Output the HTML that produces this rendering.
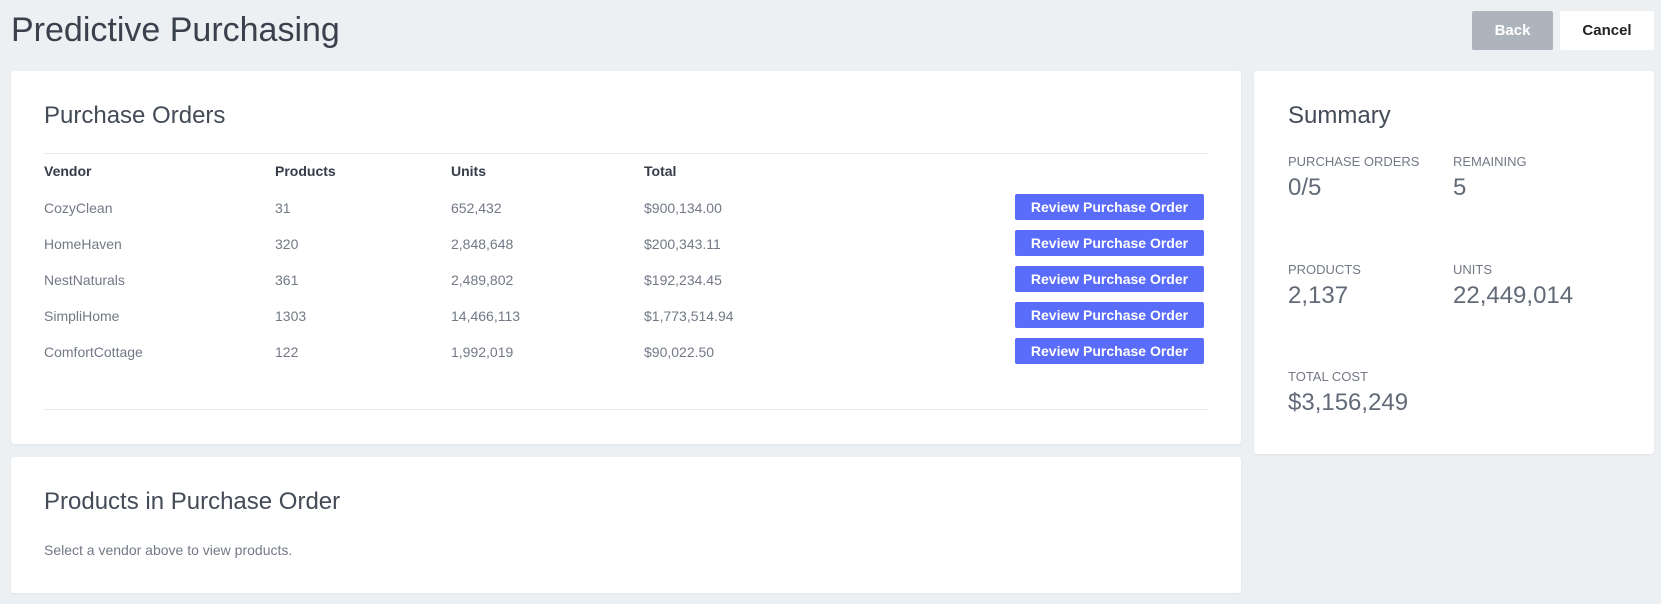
<!DOCTYPE html>
<html><head><style>
*{margin:0;padding:0;box-sizing:border-box}
body{width:1661px;height:604px;background:#edf0f3;font-family:"Liberation Sans",sans-serif;color:#333;position:relative;overflow:hidden}
.a{position:absolute;white-space:nowrap}
.card{position:absolute;background:#fff;border-radius:3px;box-shadow:0 1px 2px rgba(0,0,0,.06)}
.h{font-size:24px;color:#444b57}
.th{font-size:14px;font-weight:bold;color:#353c48}
.td{font-size:14px;color:#727985}
.btn{position:absolute;left:1015px;width:189px;height:26px;background:#5a6cfa;color:#fff;font-size:14px;font-weight:bold;text-align:center;line-height:26px;border-radius:2px}
.lab{font-size:13px;color:#727985}
.val{font-size:24px;color:#626a78}
</style></head><body>
<div class="a" style="left:11px;top:11px;font-size:34px;color:#3a414d">Predictive Purchasing</div>
<div class="a" style="left:1472px;top:11px;width:81px;height:39px;background:#adb4bc;color:#fff;font-weight:bold;font-size:15px;text-align:center;line-height:39px;border-radius:2px">Back</div>
<div class="a" style="left:1560px;top:11px;width:94px;height:39px;background:#fff;color:#222;font-weight:bold;font-size:15px;text-align:center;line-height:39px;border-radius:2px">Cancel</div>

<div class="card" style="left:11px;top:71px;width:1230px;height:373px"></div>
<div class="a h" style="left:44px;top:102px">Purchase Orders</div>
<div class="a" style="left:44px;top:153px;width:1164px;height:1px;background:#e8eaed"></div>
<div class="a th" style="left:44px;top:163px">Vendor</div>
<div class="a th" style="left:275px;top:163px">Products</div>
<div class="a th" style="left:451px;top:163px">Units</div>
<div class="a th" style="left:644px;top:163px">Total</div>

<div class="a td" style="left:44px;top:200px">CozyClean</div><div class="a td" style="left:275px;top:200px">31</div><div class="a td" style="left:451px;top:200px">652,432</div><div class="a td" style="left:644px;top:200px">$900,134.00</div><div class="btn" style="top:194px">Review Purchase Order</div>
<div class="a td" style="left:44px;top:236px">HomeHaven</div><div class="a td" style="left:275px;top:236px">320</div><div class="a td" style="left:451px;top:236px">2,848,648</div><div class="a td" style="left:644px;top:236px">$200,343.11</div><div class="btn" style="top:230px">Review Purchase Order</div>
<div class="a td" style="left:44px;top:272px">NestNaturals</div><div class="a td" style="left:275px;top:272px">361</div><div class="a td" style="left:451px;top:272px">2,489,802</div><div class="a td" style="left:644px;top:272px">$192,234.45</div><div class="btn" style="top:266px">Review Purchase Order</div>
<div class="a td" style="left:44px;top:308px">SimpliHome</div><div class="a td" style="left:275px;top:308px">1303</div><div class="a td" style="left:451px;top:308px">14,466,113</div><div class="a td" style="left:644px;top:308px">$1,773,514.94</div><div class="btn" style="top:302px">Review Purchase Order</div>
<div class="a td" style="left:44px;top:344px">ComfortCottage</div><div class="a td" style="left:275px;top:344px">122</div><div class="a td" style="left:451px;top:344px">1,992,019</div><div class="a td" style="left:644px;top:344px">$90,022.50</div><div class="btn" style="top:338px">Review Purchase Order</div>
<div class="a" style="left:44px;top:409px;width:1164px;height:1px;background:#e8eaed"></div>

<div class="card" style="left:11px;top:457px;width:1230px;height:136px"></div>
<div class="a h" style="left:44px;top:488px">Products in Purchase Order</div>
<div class="a td" style="left:44px;top:542px">Select a vendor above to view products.</div>

<div class="card" style="left:1254px;top:71px;width:400px;height:383px"></div>
<div class="a h" style="left:1288px;top:102px">Summary</div>
<div class="a lab" style="left:1288px;top:154px">PURCHASE ORDERS</div><div class="a lab" style="left:1453px;top:154px">REMAINING</div>
<div class="a val" style="left:1288px;top:174px">0/5</div><div class="a val" style="left:1453px;top:174px">5</div>
<div class="a lab" style="left:1288px;top:262px">PRODUCTS</div><div class="a lab" style="left:1453px;top:262px">UNITS</div>
<div class="a val" style="left:1288px;top:282px">2,137</div><div class="a val" style="left:1453px;top:282px">22,449,014</div>
<div class="a lab" style="left:1288px;top:369px">TOTAL COST</div>
<div class="a val" style="left:1288px;top:389px">$3,156,249</div>
</body></html>
